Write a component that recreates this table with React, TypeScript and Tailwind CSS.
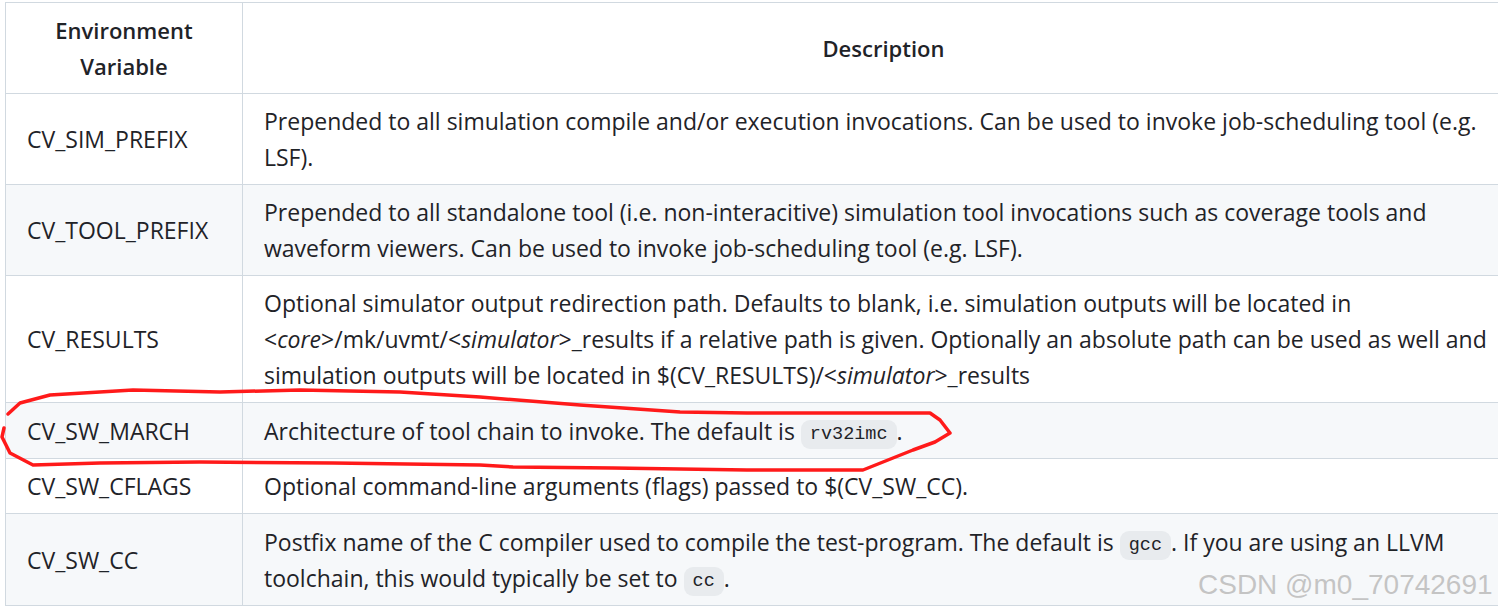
import React from "react";

const FONT = { fontFamily: '"Open Sans", "Noto Sans", sans-serif' };

function Code({ children }: { children: React.ReactNode }) {
  return (
    <code className="inline-block rounded-[9px] bg-[#e8ebee] px-[9px] leading-[29px] text-[18.5px] font-['Liberation_Mono',monospace] align-[1px]">
      {children}
    </code>
  );
}

function Row({
  name,
  gray,
  h,
  children,
}: {
  name: string;
  gray?: boolean;
  h: string;
  children: React.ReactNode;
}) {
  return (
    <div className={`flex border-b border-[#d1d9e0] ${gray ? "bg-[#f6f8fa]" : "bg-white"} ${h}`}>
      <div className="flex w-[237px] shrink-0 items-center border-r border-[#d1d9e0] px-[21px]">{name}</div>
      <div className="flex flex-1 flex-col justify-center px-[21px]">{children}</div>
    </div>
  );
}

const pts: [number, number][] = [
  [8, 414], [20, 403], [50, 395], [133, 390], [220, 392], [300, 390], [400, 392], [480, 397],
  [580, 405], [680, 412], [747, 413], [930, 413], [940, 420], [950, 433], [935, 442], [913, 450],
  [863, 470], [747, 470], [613, 468], [513, 467], [480, 465], [333, 463], [200, 462], [100, 463],
  [33, 465], [10, 453], [2, 437], [4, 428],
];

export default function App() {
  const d = "M " + pts.map((p) => p.join(" ")).join(" L ");
  return (
    <div className="relative h-[613px] w-[1498px] overflow-hidden bg-white text-[23px] leading-[36px] text-[#1f2328]" style={FONT}>
      <div className="ml-[5px] mt-[2px] w-[1519px] border-l border-t border-[#d1d9e0] whitespace-nowrap">
        <div className="flex h-[91px] border-b border-[#d1d9e0] bg-white text-[22px] font-semibold">
          <div className="flex w-[237px] shrink-0 items-center justify-center border-r border-[#d1d9e0] text-center">
            Environment
            <br />
            Variable
          </div>
          <div className="flex flex-1 items-center justify-center">Description</div>
        </div>
        <Row name="CV_SIM_PREFIX" h="h-[91px]">
          <div>Prepended to all simulation compile and/or execution invocations. Can be used to invoke job-scheduling tool (e.g.</div>
          <div>LSF).</div>
        </Row>
        <Row name="CV_TOOL_PREFIX" gray h="h-[91px]">
          <div>Prepended to all standalone tool (i.e. non-interacitive) simulation tool invocations such as coverage tools and</div>
          <div>waveform viewers. Can be used to invoke job-scheduling tool (e.g. LSF).</div>
        </Row>
        <Row name="CV_RESULTS" h="h-[127px]">
          <div>Optional simulator output redirection path. Defaults to blank, i.e. simulation outputs will be located in</div>
          <div>
            &lt;<em>core</em>&gt;/mk/uvmt/&lt;<em>simulator</em>&gt;_results if a relative path is given. Optionally an absolute path can be used as well and
          </div>
          <div>
            simulation outputs will be located in $(CV_RESULTS)/&lt;<em>simulator</em>&gt;_results
          </div>
        </Row>
        <Row name="CV_SW_MARCH" gray h="h-[56px]">
          <div>
            Architecture of tool chain to invoke. The default is <Code>rv32imc</Code>.
          </div>
        </Row>
        <Row name="CV_SW_CFLAGS" h="h-[55px]">
          <div>Optional command-line arguments (flags) passed to $(CV_SW_CC).</div>
        </Row>
        <Row name="CV_SW_CC" gray h="h-[92px]">
          <div>
            Postfix name of the C compiler used to compile the test-program. The default is <Code>gcc</Code>. If you are using an LLVM
          </div>
          <div>
            toolchain, this would typically be set to <Code>cc</Code>.
          </div>
        </Row>
      </div>

      <svg className="pointer-events-none absolute left-0 top-0" width="1498" height="613" viewBox="0 0 1498 613">
        <path d={d} fill="none" stroke="#ff1a1a" strokeWidth="3.5" strokeLinejoin="round" strokeLinecap="round" />
      </svg>

      <div
        className="pointer-events-none absolute left-[1198px] top-[568px] text-[28px] leading-[34px] text-[#c4c4c4] font-['Liberation_Sans',Arial,sans-serif]"
        style={{ textShadow: "0 0 1px #ffffff" }}
      >
        CSDN @m0_70742691
      </div>
    </div>
  );
}
